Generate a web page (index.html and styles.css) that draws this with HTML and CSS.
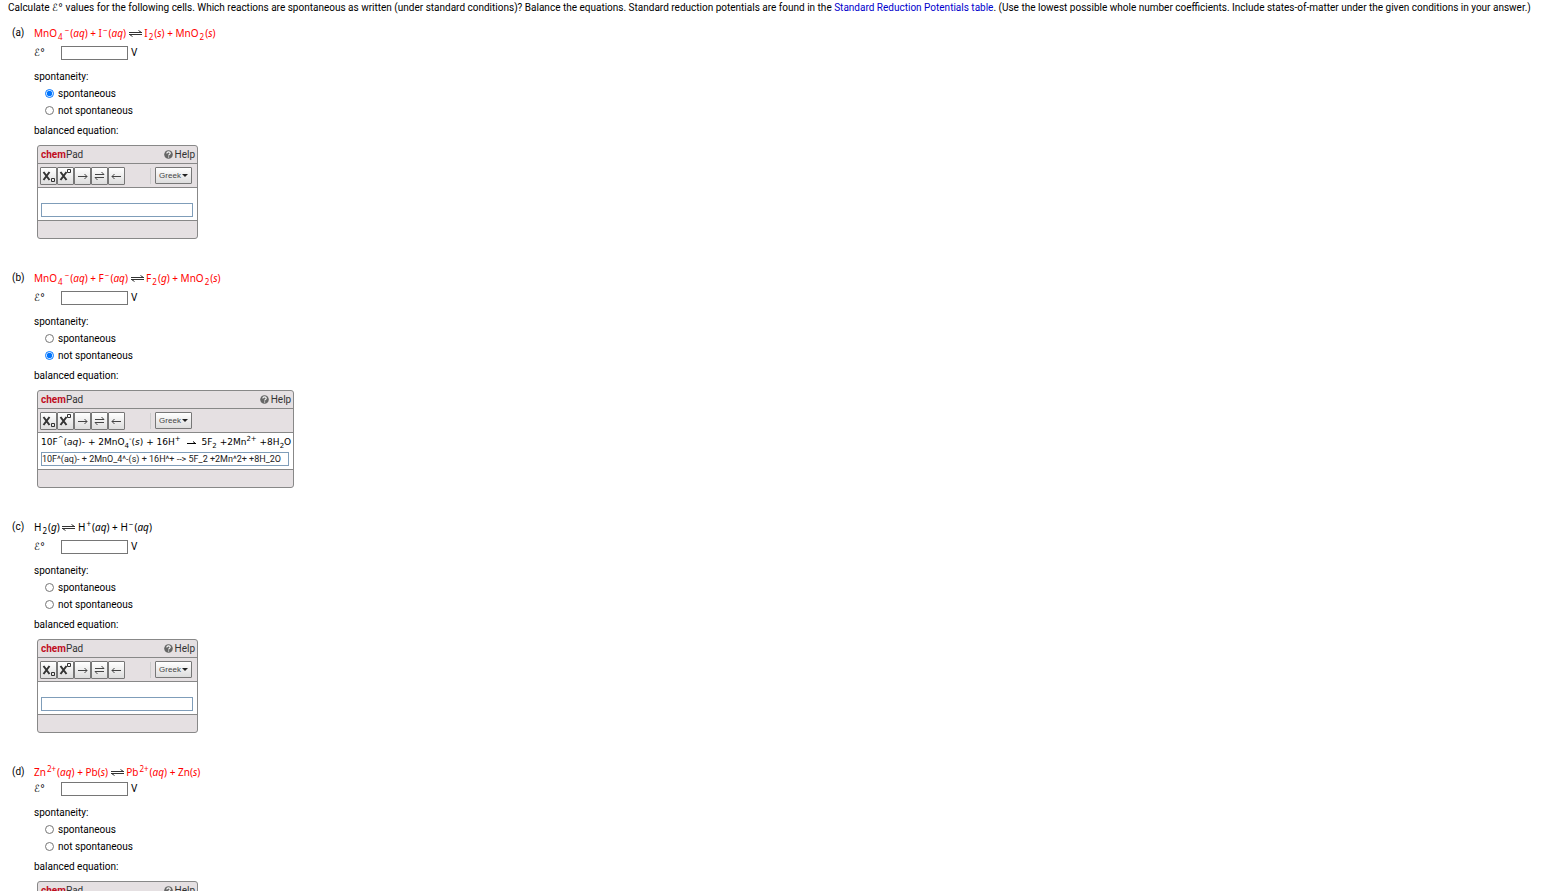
FILE: index.html
```html
<!DOCTYPE html>
<html lang="en">

<head>
  <meta charset="UTF-8">
  <title>Cell Potentials</title>
  <meta name="viewport" content="width=device-width, initial-scale=1.0">
  <link rel="stylesheet" href="styles.css">
</head>

<body>

  <!-- shared icons -->
  <svg class="sprite" aria-hidden="true">
    <symbol id="equil" viewBox="0 0 13 7">
      <path d="M0 2.5H13M9.5 0.5L12.5 2.5M0 4.5H13M0.5 4.5L3.5 6.5" fill="none" stroke="#333" stroke-width="1" />
    </symbol>
    <symbol id="sub" viewBox="0 0 15 16">
      <path d="M2.5 4L8.5 12M8.5 4L2.5 12" fill="none" stroke="#333" stroke-width="2" />
      <path d="M10.5 10.5h3v3h-3z" fill="none" stroke="#333" />
    </symbol>
    <symbol id="sup" viewBox="0 0 15 16">
      <path d="M2.5 4L8.5 12M8.5 4L2.5 12" fill="none" stroke="#333" stroke-width="2" />
      <path d="M9.5 1.5h3v3h-3z" fill="none" stroke="#333" />
    </symbol>
    <symbol id="right" viewBox="0 0 15 16">
      <path d="M3 8.5H12M9.5 6L12 8.5L9.5 11" fill="none" stroke="#444" />
    </symbol>
    <symbol id="both" viewBox="0 0 15 16">
      <path d="M3 6.5H12M9.5 4L12 6.5M12 9.5H3M5.5 12L3 9.5" fill="none" stroke="#444" />
    </symbol>
    <symbol id="left" viewBox="0 0 15 16">
      <path d="M12 8.5H3M5.5 6L3 8.5L5.5 11" fill="none" stroke="#444" />
    </symbol>
    <symbol id="help" viewBox="0 0 9 9">
      <circle cx="4.5" cy="4.5" r="4.3" fill="#666" />
      <path d="M2.8 3.6C2.8 1.3 6.4 1.4 6.2 3.4C6.1 4.4 4.6 4.4 4.6 5.6M4.6 6.5V7.6" fill="none" stroke="#fff" stroke-width="1.1" />
    </symbol>
  </svg>

  <p class="question">Calculate <span class="emf">ℰ°</span> values for the following cells. Which reactions are spontaneous as written (under standard conditions)? Balance the equations. Standard reduction potentials are found in the <a href="#">Standard Reduction Potentials table</a>. (Use the lowest possible whole number coefficients. Include states-of-matter under the given conditions in your answer.)</p>

  <section class="part">
    <span class="letter">(a)</span>
    <div class="answer">
      <div class="equation red has-sub">MnO<sub>4</sub><sup>−</sup>(<i>aq</i>) + I<sup>−</sup>(<i>aq</i>) <svg class="equil"><use href="#equil" /></svg> I<sub>2</sub>(<i>s</i>) + MnO<sub>2</sub>(<i>s</i>)</div>
      <div class="value">
        <label class="emf" for="emf-a">ℰ°</label>
        <input type="text" id="emf-a"> V
      </div>
      <fieldset>
        <legend>spontaneity:</legend>
        <label><input type="radio" name="spont-a" checked>spontaneous</label>
        <label><input type="radio" name="spont-a">not spontaneous</label>
      </fieldset>
      <label class="balanced" for="pad-a">balanced equation:</label>
      <div class="chempad">
        <div class="pad-head">
          <span><b>chem</b>Pad</span>
          <a href="#"><svg class="help"><use href="#help" /></svg>Help</a>
        </div>
        <div class="pad-tools">
          <button type="button" aria-label="Subscript"><svg><use href="#sub" /></svg></button>
          <button type="button" aria-label="Superscript"><svg><use href="#sup" /></svg></button>
          <button type="button" aria-label="Right arrow"><svg><use href="#right" /></svg></button>
          <button type="button" aria-label="Equilibrium"><svg><use href="#both" /></svg></button>
          <button type="button" aria-label="Left arrow"><svg><use href="#left" /></svg></button>
          <span class="divider"></span>
          <button type="button" class="greek">Greek</button>
        </div>
        <div class="pad-body">
          <div class="preview"></div>
          <input type="text" id="pad-a">
        </div>
        <div class="pad-foot"></div>
      </div>
    </div>
  </section>

  <section class="part">
    <span class="letter">(b)</span>
    <div class="answer">
      <div class="equation red has-sub">MnO<sub>4</sub><sup>−</sup>(<i>aq</i>) + F<sup>−</sup>(<i>aq</i>) <svg class="equil"><use href="#equil" /></svg> F<sub>2</sub>(<i>g</i>) + MnO<sub>2</sub>(<i>s</i>)</div>
      <div class="value">
        <label class="emf" for="emf-b">ℰ°</label>
        <input type="text" id="emf-b"> V
      </div>
      <fieldset>
        <legend>spontaneity:</legend>
        <label><input type="radio" name="spont-b">spontaneous</label>
        <label><input type="radio" name="spont-b" checked>not spontaneous</label>
      </fieldset>
      <label class="balanced" for="pad-b">balanced equation:</label>
      <div class="chempad">
        <div class="pad-head">
          <span><b>chem</b>Pad</span>
          <a href="#"><svg class="help"><use href="#help" /></svg>Help</a>
        </div>
        <div class="pad-tools">
          <button type="button" aria-label="Subscript"><svg><use href="#sub" /></svg></button>
          <button type="button" aria-label="Superscript"><svg><use href="#sup" /></svg></button>
          <button type="button" aria-label="Right arrow"><svg><use href="#right" /></svg></button>
          <button type="button" aria-label="Equilibrium"><svg><use href="#both" /></svg></button>
          <button type="button" aria-label="Left arrow"><svg><use href="#left" /></svg></button>
          <span class="divider"></span>
          <button type="button" class="greek">Greek</button>
        </div>
        <div class="pad-body">
          <div class="preview filled">10F<sup>^</sup>(<i>aq</i>)- + 2MnO<sub>4</sub><sup>-</sup>(<i>s</i>) + 16H<sup>+</sup> <svg class="yields" viewBox="0 0 9 5"><path d="M0 3.5H9M6 1.5L8.5 3.5" fill="none" stroke="#000" /></svg> 5F<sub>2</sub> +2Mn<sup>2+</sup> +8H<sub>2</sub>O</div>
          <input type="text" id="pad-b" value="10F^(aq)- + 2MnO_4^-(s) + 16H^+ --&gt; 5F_2 +2Mn^2+ +8H_2O">
        </div>
        <div class="pad-foot"></div>
      </div>
    </div>
  </section>

  <section class="part">
    <span class="letter">(c)</span>
    <div class="answer">
      <div class="equation has-sub">H<sub>2</sub>(<i>g</i>) <svg class="equil"><use href="#equil" /></svg> H<sup>+</sup>(<i>aq</i>) + H<sup>−</sup>(<i>aq</i>)</div>
      <div class="value">
        <label class="emf" for="emf-c">ℰ°</label>
        <input type="text" id="emf-c"> V
      </div>
      <fieldset>
        <legend>spontaneity:</legend>
        <label><input type="radio" name="spont-c">spontaneous</label>
        <label><input type="radio" name="spont-c">not spontaneous</label>
      </fieldset>
      <label class="balanced" for="pad-c">balanced equation:</label>
      <div class="chempad">
        <div class="pad-head">
          <span><b>chem</b>Pad</span>
          <a href="#"><svg class="help"><use href="#help" /></svg>Help</a>
        </div>
        <div class="pad-tools">
          <button type="button" aria-label="Subscript"><svg><use href="#sub" /></svg></button>
          <button type="button" aria-label="Superscript"><svg><use href="#sup" /></svg></button>
          <button type="button" aria-label="Right arrow"><svg><use href="#right" /></svg></button>
          <button type="button" aria-label="Equilibrium"><svg><use href="#both" /></svg></button>
          <button type="button" aria-label="Left arrow"><svg><use href="#left" /></svg></button>
          <span class="divider"></span>
          <button type="button" class="greek">Greek</button>
        </div>
        <div class="pad-body">
          <div class="preview"></div>
          <input type="text" id="pad-c">
        </div>
        <div class="pad-foot"></div>
      </div>
    </div>
  </section>

  <section class="part">
    <span class="letter">(d)</span>
    <div class="answer">
      <div class="equation red">Zn<sup>2+</sup>(<i>aq</i>) + Pb(<i>s</i>) <svg class="equil"><use href="#equil" /></svg> Pb<sup>2+</sup>(<i>aq</i>) + Zn(<i>s</i>)</div>
      <div class="value">
        <label class="emf" for="emf-d">ℰ°</label>
        <input type="text" id="emf-d"> V
      </div>
      <fieldset>
        <legend>spontaneity:</legend>
        <label><input type="radio" name="spont-d">spontaneous</label>
        <label><input type="radio" name="spont-d">not spontaneous</label>
      </fieldset>
      <label class="balanced" for="pad-d">balanced equation:</label>
      <div class="chempad">
        <div class="pad-head">
          <span><b>chem</b>Pad</span>
          <a href="#"><svg class="help"><use href="#help" /></svg>Help</a>
        </div>
        <div class="pad-tools">
          <button type="button" aria-label="Subscript"><svg><use href="#sub" /></svg></button>
          <button type="button" aria-label="Superscript"><svg><use href="#sup" /></svg></button>
          <button type="button" aria-label="Right arrow"><svg><use href="#right" /></svg></button>
          <button type="button" aria-label="Equilibrium"><svg><use href="#both" /></svg></button>
          <button type="button" aria-label="Left arrow"><svg><use href="#left" /></svg></button>
          <span class="divider"></span>
          <button type="button" class="greek">Greek</button>
        </div>
        <div class="pad-body">
          <div class="preview"></div>
          <input type="text" id="pad-d">
        </div>
        <div class="pad-foot"></div>
      </div>
    </div>
  </section>

</body>

</html>
```

FILE: styles.css
```css
* {
  box-sizing: border-box;
}

body {
  margin: 0;
  padding: 0 8px;
  background: #fff;
  color: #000;
  font-family: Roboto, Verdana, sans-serif;
  font-size: 10px;
  line-height: 16px;
  overflow-x: hidden;
}

a {
  color: #0000cc;
  text-decoration: none;
}

sub,
sup {
  font-size: 8px;
  line-height: 0;
}

.sprite {
  display: none;
}

.question {
  margin: 0 0 9px;
}

.emf {
  font-family: "DejaVu Sans", serif;
  font-style: italic;
  line-height: 1;
}

.part {
  display: flex;
  padding-left: 4px;
  margin-bottom: 31px;
}

.letter {
  flex: none;
  width: 22px;
}

.equation {
  font-family: "Noto Sans", Verdana, sans-serif;
  white-space: nowrap;
}

.equation sub,
.equation sup {
  margin: 0 1px;
}

.has-sub {
  padding-bottom: 3px;
}

.red {
  color: #ff0000;
}

.equil {
  width: 13px;
  height: 7px;
}

.value {
  display: flex;
  align-items: center;
  height: 18px;
  gap: 3px;
}

.value .emf {
  width: 24px;
}

.value input {
  width: 67px;
  height: 14px;
  padding: 0 2px;
  border: 1px solid #767676;
  font-size: 10px;
}

fieldset {
  border: 0;
  margin: 7px 0 4px;
  padding: 0;
}

legend {
  padding: 0;
}

fieldset label {
  display: flex;
  align-items: center;
  height: 17px;
  padding-left: 11px;
}

fieldset input {
  width: 9px;
  height: 9px;
  margin: 0 4px 0 0;
}

.balanced {
  display: block;
}

.chempad {
  width: fit-content;
  min-width: 161px;
  margin: 6px 0 0 3px;
  border: 1px solid #888;
  border-radius: 3px;
  background: #e5e0e2;
}

.pad-head {
  display: flex;
  justify-content: space-between;
  align-items: center;
  height: 18px;
  padding: 0 2px 0 3px;
  border-bottom: 1px solid #888;
  color: #333;
}

.pad-head b {
  color: #c00d1e;
}

.pad-head a {
  display: flex;
  align-items: center;
  gap: 2px;
  color: #333;
}

.help {
  width: 9px;
  height: 9px;
}

.pad-tools {
  display: flex;
  align-items: center;
  height: 24px;
  padding: 0 2px;
  border-bottom: 1px solid #888;
}

.pad-tools button {
  width: 17px;
  height: 18px;
  padding: 0;
  border: 1px solid #777;
  border-radius: 1px;
  background: linear-gradient(#fff, #ddd);
}

.pad-tools svg {
  display: block;
  width: 15px;
  height: 16px;
}

.divider {
  width: 1px;
  height: 16px;
  margin: 0 4px 0 25px;
  background: #ccc;
}

.pad-tools .greek {
  display: flex;
  align-items: center;
  justify-content: center;
  gap: 1px;
  width: 37px;
  height: 17px;
  color: #444;
  font-family: "Liberation Sans", Arial, sans-serif;
  font-size: 8px;
}

.greek::after {
  content: "";
  border: 3px solid transparent;
  border-top-color: #222;
  border-bottom: 0;
}

.pad-body {
  padding: 0 2px 3px 3px;
  border-bottom: 1px solid #888;
  background: #fff;
}

.preview {
  min-height: 15px;
  white-space: nowrap;
}

.filled {
  font-family: Verdana, "DejaVu Sans", sans-serif;
  font-size: 9px;
  line-height: 19px;
}

.filled sub,
.filled sup {
  font-size: 7px;
}

.pad-body input {
  display: block;
  width: calc(100% - 2px);
  height: 14px;
  padding: 0;
  border: 1px solid #7f9db9;
  color: #222;
  font-family: Roboto, Arial, sans-serif;
  font-size: 9px;
}

.pad-foot {
  height: 17px;
}

.yields {
  width: 9px;
  height: 5px;
  margin: 0 3px;
}
```
